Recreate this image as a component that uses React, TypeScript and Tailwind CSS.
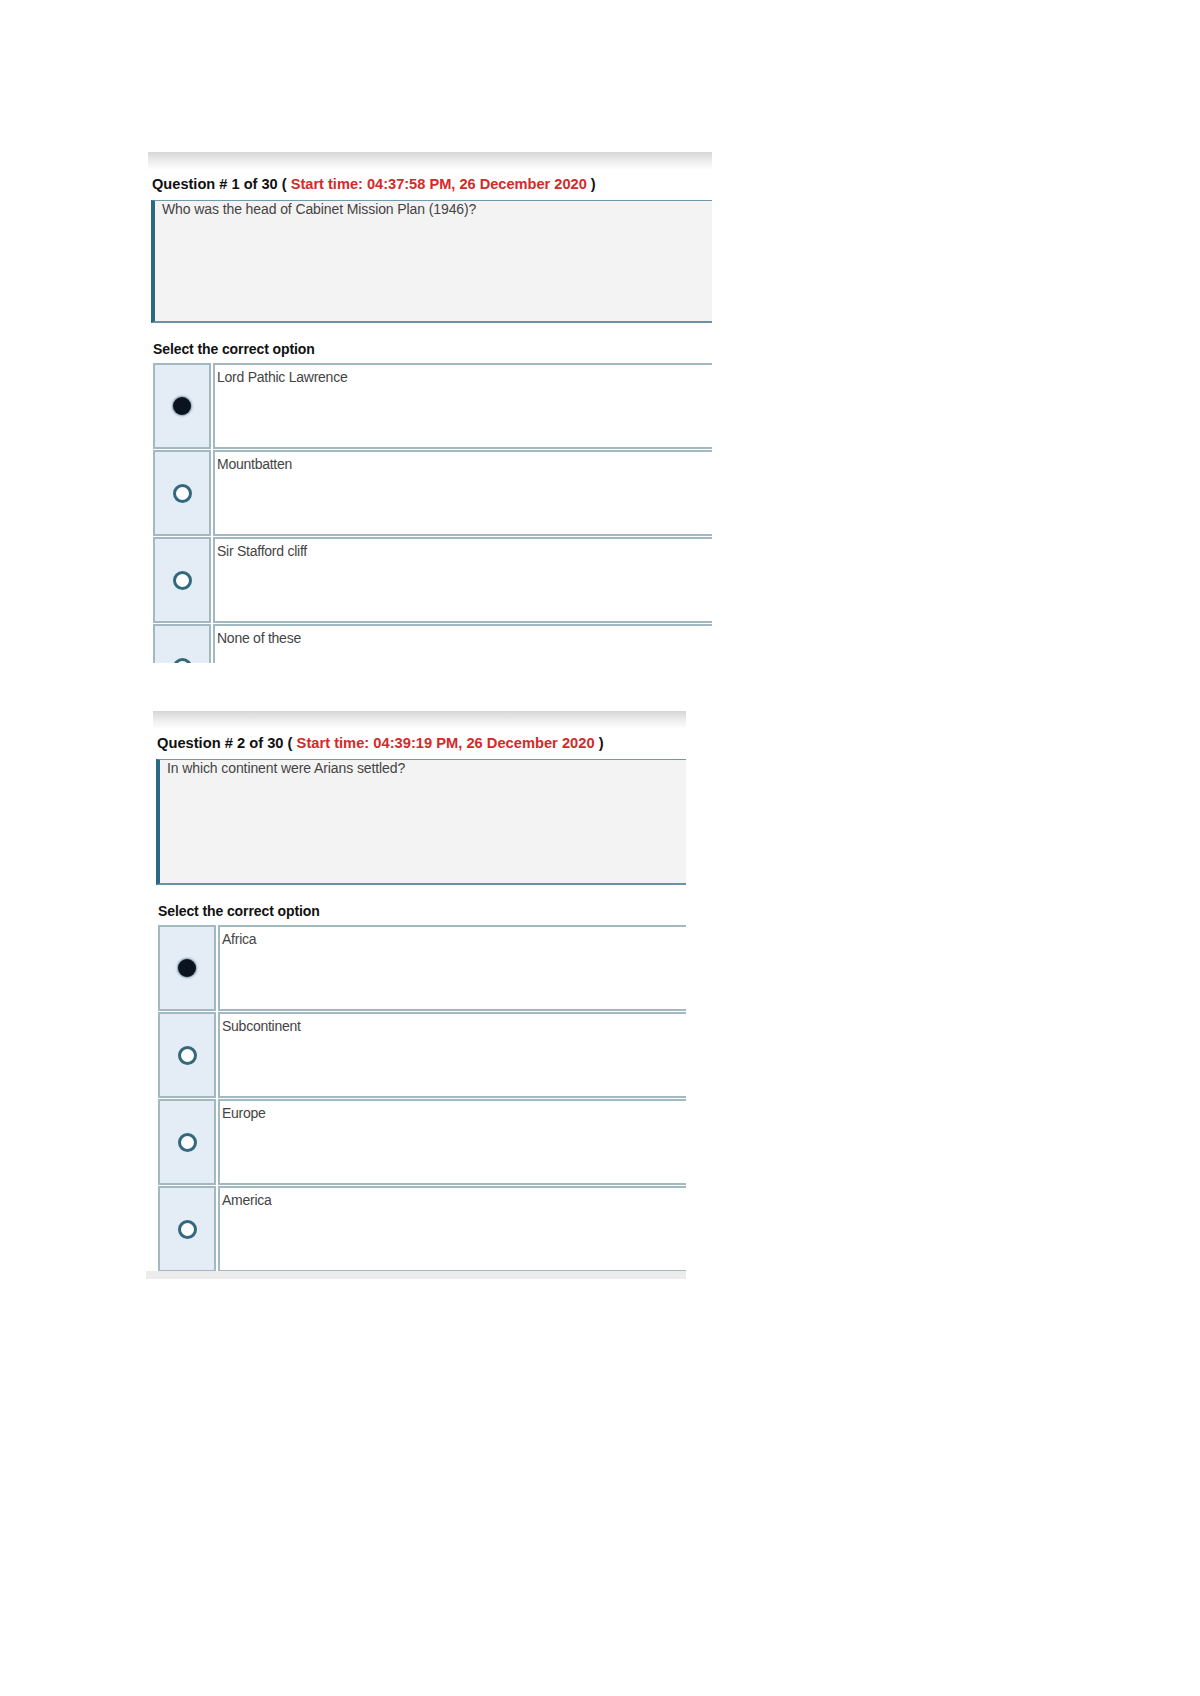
import React from "react";

type Opt = { text: string; selected?: boolean };

function Radio({ selected }: { selected?: boolean }) {
  if (selected) {
    return (
      <div className="w-[18px] h-[18px] rounded-full bg-[#0b1320] shadow-[0_0_2px_1px_rgba(40,80,110,0.55)]" />
    );
  }
  return <div className="w-[19px] h-[19px] rounded-full border-[3px] border-[#33687d] bg-white" />;
}

function Row({ opt }: { opt: Opt }) {
  return (
    <div className="flex h-[86px] gap-[2px] mb-[1px] shrink-0">
      <div className="w-[58px] shrink-0 border-2 border-[#a2b9c2] bg-[#e4ecf5] flex items-center justify-center">
        <Radio selected={opt.selected} />
      </div>
      <div className="flex-1 border-2 border-r-0 border-[#a2b9c2] bg-white pl-[2px] pt-0">
        <span className="text-[14px] leading-[15px] text-[#444] tracking-[-0.25px]">{opt.text}</span>
      </div>
    </div>
  );
}

function Panel({
  num,
  time,
  question,
  options,
  width,
  height,
  boxH,
  titleCls,
}: {
  num: number;
  time: string;
  question: string;
  options: Opt[];
  width: string;
  height: string;
  boxH: string;
  titleCls: string;
}) {
  return (
    <div className={`${width} ${height} overflow-hidden flex flex-col`}>
      <div className="h-[18px] shrink-0 bg-gradient-to-b from-[#d6d6d6] via-[#ededed] to-white" />
      <div
        className={`mt-[6px] pl-[4px] h-[16px] leading-[16px] ${titleCls} font-bold text-[#111] whitespace-nowrap shrink-0`}
      >
        Question # {num} of 30 ({" "}
        <span className="text-[#d42a2a]">Start time: {time}</span> )
      </div>
      <div
        className={`mt-[8px] ml-[3px] ${boxH} shrink-0 bg-[#f3f3f3] border-t border-b-2 border-l-4 border-t-[#6f9aab] border-b-[#6b93a2] border-l-[#2a6886] pl-[7px] pt-0`}
      >
        <span className="block text-[14px] leading-[17px] text-[#444] tracking-[-0.1px]">{question}</span>
      </div>
      <div className="mt-[18px] pl-[5px] h-[16px] leading-[16px] text-[14px] font-bold tracking-[-0.1px] text-[#111] shrink-0">
        Select the correct option
      </div>
      <div className="mt-[6px] ml-[5px] flex flex-col">
        {options.map((o, i) => (
          <Row key={i} opt={o} />
        ))}
      </div>
    </div>
  );
}

export default function App() {
  return (
    <div
      className="w-[1200px] h-[1696px] bg-white"
      style={{ fontFamily: '"Liberation Sans", Arial, sans-serif' }}
    >
      <div className="pt-[152px] pl-[148px]">
        <Panel
          num={1}
          time="04:37:58 PM, 26 December 2020"
          question="Who was the head of Cabinet Mission Plan (1946)?"
          width="w-[564px]"
          height="h-[511px]"
          boxH="h-[123px]"
          titleCls="text-[14.6px] tracking-[0px]"
          options={[
            { text: "Lord Pathic Lawrence", selected: true },
            { text: "Mountbatten" },
            { text: "Sir Stafford cliff" },
            { text: "None of these" },
          ]}
        />
      </div>
      <div className="mt-[48px] pl-[153px]">
        <Panel
          num={2}
          time="04:39:19 PM, 26 December 2020"
          question="In which continent were Arians settled?"
          width="w-[533px]"
          height="h-[560px]"
          boxH="h-[126px]"
          titleCls="text-[14.7px] tracking-[0px]"
          options={[
            { text: "Africa", selected: true },
            { text: "Subcontinent" },
            { text: "Europe" },
            { text: "America" },
          ]}
        />
      </div>
      <div className="ml-[146px] w-[540px] h-[8px] bg-[#ececec]" />
    </div>
  );
}
